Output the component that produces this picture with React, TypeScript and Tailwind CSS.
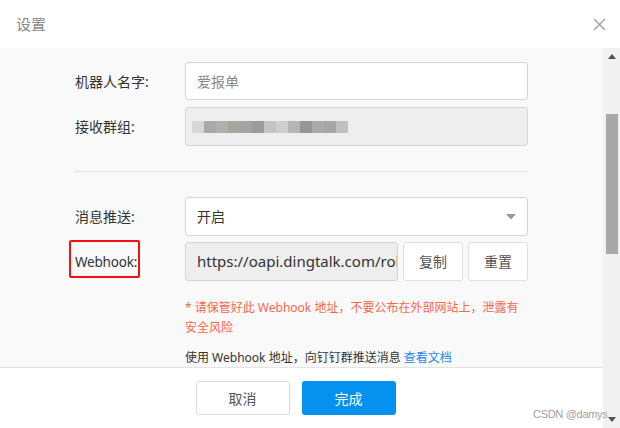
import React from "react";

const blocks = ["#d6d6d6", "#a9a9a9", "#b0b0b0", "#a6a69c", "#a3a3a3", "#999c9c", "#c4c4c6", "#d2cccc", "#b5b5b5", "#9a9494", "#aaaaaa", "#a3a6a6", "#c0c0c0"];

export default function App() {
  return (
    <div
      className="w-[620px] h-[428px] flex flex-col bg-white overflow-hidden relative"
      style={{ fontFamily: '"Noto Sans", "Noto Sans CJK SC", sans-serif' }}
    >
      {/* header */}
      <div className="h-12 shrink-0 flex items-center justify-between pl-4 pr-[14px]">
        <span className="text-[15px] text-[#8a8a8a]">设置</span>
        <svg width="13" height="13" viewBox="0 0 13 13">
          <path d="M1 1L12 12M12 1L1 12" stroke="#9a9a9a" strokeWidth="1.2" />
        </svg>
      </div>
      <div className="flex-1 flex min-h-0">
        <div className="flex-1 flex flex-col min-w-0">
          {/* body */}
          <div className="flex-1 bg-[#f9f9f9] pt-[14px] pl-[75px] pr-[75px] text-[14px] text-[#333] overflow-hidden">
            <div className="flex items-center h-[38px]">
              <div className="w-[110px] shrink-0">机器人名字:</div>
              <div className="flex-1 h-full bg-white border border-[#d4d4d4] rounded-[3px] flex items-center pl-[11px] text-[#888]">
                爱报单
              </div>
            </div>
            <div className="flex items-center h-[39px] mt-[7px]">
              <div className="w-[110px] shrink-0">接收群组:</div>
              <div className="flex-1 h-full bg-[#eeeeee] border border-[#d4d4d4] rounded-[3px] flex items-center pl-[6px]">
                <div className="flex h-[12px]">
                  {blocks.map((c, i) => (
                    <div key={i} className="w-[12px] h-full" style={{ background: c }} />
                  ))}
                </div>
              </div>
            </div>
            <div className="h-px bg-[#e4e4e4] mt-[25px]" />
            <div className="flex items-center h-[39px] mt-[25px]">
              <div className="w-[110px] shrink-0">消息推送:</div>
              <div className="flex-1 h-full bg-white border border-[#d4d4d4] rounded-[3px] flex items-center justify-between pl-[11px] pr-[11px]">
                <span>开启</span>
                <svg width="10" height="6" viewBox="0 0 10 6">
                  <path d="M0 0H10L5 5.5Z" fill="#999" />
                </svg>
              </div>
            </div>
            <div className="flex items-center h-[39px] mt-[6px]">
              <div className="w-[110px] shrink-0 relative">
                <span className="text-[13.5px] tracking-[-0.2px]">Webhook:</span>
                <div className="absolute left-[-6px] top-[-11px] w-[71px] h-[38px] border-2 border-[#f31010] rounded-[2px]" />
              </div>
              <div className="flex-1 min-w-0 h-full bg-[#eeeeee] border border-[#d4d4d4] rounded-[3px] flex items-center pl-[11px] overflow-hidden whitespace-nowrap text-[15px]">
                https://oapi.dingtalk.com/rob
              </div>
              <div className="w-[60px] h-full ml-[5px] bg-white border border-[#e0e0e0] rounded-[3px] flex items-center justify-center text-[#555]">复制</div>
              <div className="w-[60px] h-full ml-[5px] bg-white border border-[#e0e0e0] rounded-[3px] flex items-center justify-center text-[#555]">重置</div>
            </div>
            <div className="ml-[110px] mt-[17px] text-[12px] leading-[20px] text-[#f5684c] whitespace-nowrap">
              * 请保管好此 Webhook 地址，不要公布在外部网站上，泄露有
              <br />
              安全风险
            </div>
            <div className="ml-[110px] mt-[10px] text-[12px] leading-[20px] text-[#333] whitespace-nowrap">
              使用 Webhook 地址，向钉钉群推送消息 <span className="text-[#1e88e5]">查看文档</span>
            </div>
          </div>
          {/* footer */}
          <div className="h-[61px] shrink-0 border-t border-[#e4e4e4] bg-white flex items-center justify-center gap-3 pr-[12px]">
            <button className="w-[94px] h-[34px] border border-[#dcdcdc] rounded-[3px] bg-white text-[14px] text-[#555]">取消</button>
            <button className="w-[94px] h-[34px] rounded-[3px] bg-[#0591ef] text-[14px] text-white">完成</button>
          </div>
        </div>
        {/* scrollbar */}
        <div className="w-[17px] shrink-0 bg-[#f1f1f1] flex flex-col items-center">
          <div className="h-[17px] flex items-center justify-center">
            <svg width="8" height="5" viewBox="0 0 8 5"><path d="M4 0L8 5H0Z" fill="#505050" /></svg>
          </div>
          <div className="w-[12px] h-[140px] bg-[#a8a8a8] mt-[49px]" />
          <div className="flex-1" />
          <div className="h-[17px] flex items-center justify-center">
            <svg width="8" height="5" viewBox="0 0 8 5"><path d="M0 0H8L4 5Z" fill="#505050" /></svg>
          </div>
        </div>
      </div>
      <div
        className="absolute left-[533px] top-[406px] text-[11px] tracking-[-0.3px] text-[#a0a0a0] leading-[16px]"
        style={{ fontFamily: '"Liberation Sans", sans-serif' }}
      >
        CSDN @damys
      </div>
    </div>
  );
}
